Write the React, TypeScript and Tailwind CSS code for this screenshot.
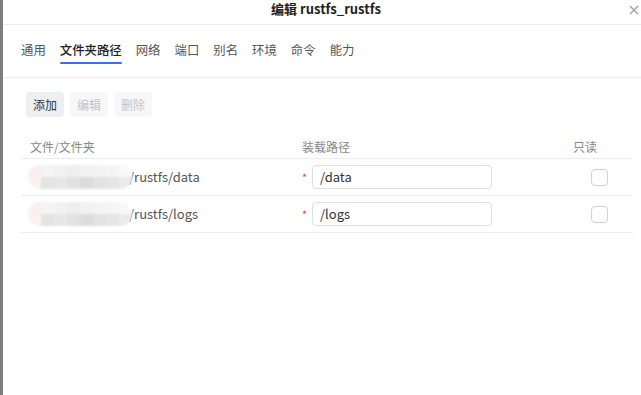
import React from 'react';

const tabs = ['通用', '文件夹路径', '网络', '端口', '别名', '环境', '命令', '能力'];

const rows = [
  { host: '/rustfs/data', mount: '/data' },
  { host: '/rustfs/logs', mount: '/logs' },
];

// shades for the pixelated (masked) host path
const shades = [
  ['#fbeeee', '#f4f4f4', '#f1f1f1', '#eeeeee', '#f2f2f2', '#f3f3f3', '#f5f5f5', '#f8f8f8'],
  ['#fcf1f1', '#e4e4e4', '#e7e7e7', '#e2e2e2', '#dcdcdc', '#e3e3e3', '#e6e6e6', '#ebebeb'],
];

function Masked() {
  return (
    <div className="flex flex-col w-[104px] h-[24px] rounded-full overflow-hidden blur-[1px]">
      {shades.map((line, i) => (
        <div key={i} className="flex flex-1">
          {line.map((c, j) => (
            <div key={j} className="flex-1" style={{ backgroundColor: c }} />
          ))}
        </div>
      ))}
    </div>
  );
}

export default function App() {
  return (
    <div
      className="flex w-[641px] h-[395px] bg-white overflow-hidden"
      style={{ fontFamily: '"Noto Sans CJK SC", "Noto Sans", sans-serif' }}
    >
      <div className="w-[3px] shrink-0 bg-[#7d7d7d]" />

      <div className="flex-1 flex flex-col">
        {/* header */}
        <div className="relative h-[25px] border-b border-[#ececec] flex justify-center">
          <span className="text-[13px] leading-[17px] font-bold text-[#222] ml-[8px]">编辑 rustfs_rustfs</span>
          <button className="absolute right-[2px] top-[5px] text-[#a0a0a0]">
            <svg width="10" height="10" viewBox="0 0 10 10" fill="none" stroke="currentColor" strokeWidth="1.4">
              <path d="M1 1L9 9M9 1L1 9" />
            </svg>
          </button>
        </div>

        {/* tabs */}
        <div className="flex gap-[14px] pl-[18px] pt-[16px] pb-[13px] border-b border-[#ececec]">
          {tabs.map((t, i) => (
            <div key={t} className="flex flex-col">
              <span
                className={`text-[12.4px] leading-[18px] ${i === 1 ? 'text-[#222] font-medium' : 'text-[#555]'}`}
              >
                {t}
              </span>
              <div className={`mt-[3px] h-[2px] rounded-full ${i === 1 ? 'bg-[#3f6cf2]' : 'bg-transparent'}`} />
            </div>
          ))}
        </div>

        <div className="pl-[18px] pr-[8px]">
          {/* toolbar */}
          <div className="flex gap-[6px] mt-[14px] pl-[5px]">
            <button className="w-[38px] h-[25px] rounded-[4px] bg-[#eeeff3] text-[12px] text-[#333]">添加</button>
            <button className="w-[38px] h-[25px] rounded-[4px] bg-[#f7f7f9] text-[12px] text-[#c4c4c4]">编辑</button>
            <button className="w-[38px] h-[25px] rounded-[4px] bg-[#f7f7f9] text-[12px] text-[#c4c4c4]">删除</button>
          </div>

          {/* table */}
          <div className="mt-[13px]">
            <div className="grid grid-cols-[272px_271px_1fr] h-[29px] pt-[8px] border-b border-[#ebedf2] text-[12px] leading-[17px] text-[#888]">
              <div className="pl-[9px]">文件/文件夹</div>
              <div className="pl-[9px]">装载路径</div>
              <div className="pl-[9px]">只读</div>
            </div>
            {rows.map((r) => (
              <div
                key={r.host}
                className="grid grid-cols-[272px_271px_1fr] h-[37px] items-center border-b border-[#ebedf2]"
              >
                <div className="flex items-center pl-[7px]">
                  <Masked />
                  <span className="-ml-[3px] text-[13px] text-[#555]">{r.host}</span>
                </div>
                <div className="flex items-center pl-[9px]">
                  <span className="w-[10px] text-[11px] text-[#e04848] leading-none">*</span>
                  <div className="w-[180px] h-[24px] rounded-[4px] border border-[#dcdfe6] flex items-center px-[7px] text-[13px] text-[#333]">
                    {r.mount}
                  </div>
                </div>
                <div className="pl-[27px]">
                  <div className="w-[17px] h-[17px] rounded-[4px] border border-[#cfd2d8] bg-white" />
                </div>
              </div>
            ))}
          </div>
        </div>
      </div>
    </div>
  );
}
